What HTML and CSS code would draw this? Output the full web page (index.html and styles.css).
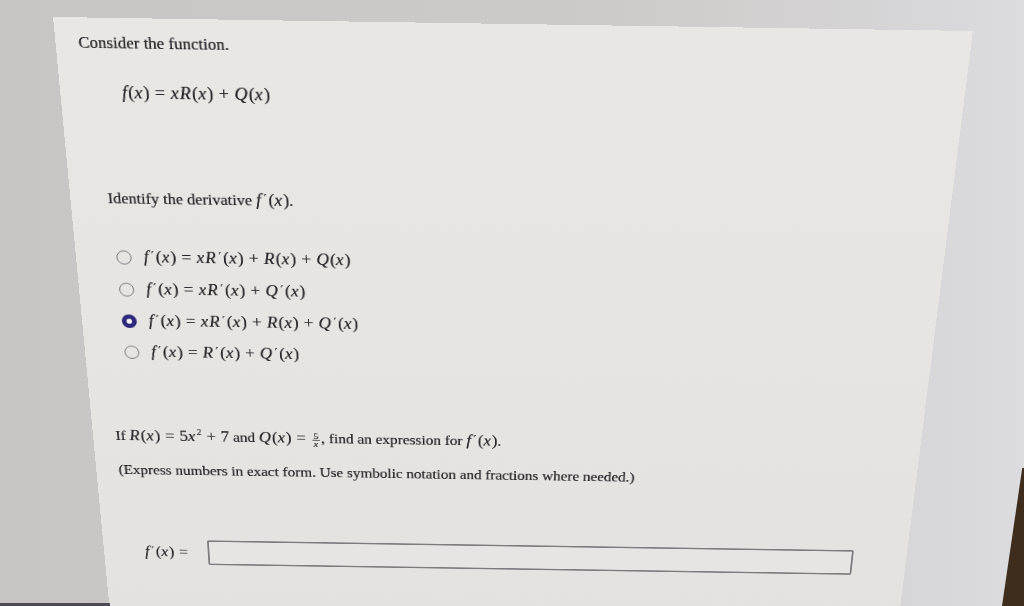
FILE: index.html
```html
<!DOCTYPE html>
<html lang="en">
<head>
<meta charset="utf-8">
<title>Consider the function</title>
<link rel="stylesheet" href="styles.css">
</head>
<body>
<div class="screen">
  <main class="card">
    <p class="lead">Consider the function.</p>
    <div class="eq m"><i>f</i>(<i>x</i>)<span class="op">=</span><i>x</i><i>R</i>(<i>x</i>)<span class="op">+</span><i>Q</i>(<i>x</i>)</div>
    <p class="prompt">Identify the derivative <span class="m"><i>f</i><span class="pr">′</span>(<i>x</i>)</span>.</p>
    <ul class="choices">
      <li class="choice"><span class="radio"></span><span class="m"><i>f</i><span class="pr">′</span>(<i>x</i>)<span class="op">=</span><i>x</i><i>R</i><span class="pr">′</span>(<i>x</i>)<span class="op">+</span><i>R</i>(<i>x</i>)<span class="op">+</span><i>Q</i>(<i>x</i>)</span></li>
      <li class="choice"><span class="radio"></span><span class="m"><i>f</i><span class="pr">′</span>(<i>x</i>)<span class="op">=</span><i>x</i><i>R</i><span class="pr">′</span>(<i>x</i>)<span class="op">+</span><i>Q</i><span class="pr">′</span>(<i>x</i>)</span></li>
      <li class="choice"><span class="radio selected"></span><span class="m"><i>f</i><span class="pr">′</span>(<i>x</i>)<span class="op">=</span><i>x</i><i>R</i><span class="pr">′</span>(<i>x</i>)<span class="op">+</span><i>R</i>(<i>x</i>)<span class="op">+</span><i>Q</i><span class="pr">′</span>(<i>x</i>)</span></li>
      <li class="choice"><span class="radio"></span><span class="m"><i>f</i><span class="pr">′</span>(<i>x</i>)<span class="op">=</span><i>R</i><span class="pr">′</span>(<i>x</i>)<span class="op">+</span><i>Q</i><span class="pr">′</span>(<i>x</i>)</span></li>
    </ul>
    <p class="given">If <span class="m"><i>R</i>(<i>x</i>)<span class="op">=</span>5<i>x</i><sup class="sq">2</sup><span class="op">+</span>7</span> and <span class="m"><i>Q</i>(<i>x</i>)<span class="op">=</span><span class="frac"><span class="num">5</span><span class="den"><i>x</i></span></span></span>, find an expression for <span class="m"><i>f</i><span class="pr">′</span>(<i>x</i>)</span>.</p>
    <p class="hint">(Express numbers in exact form. Use symbolic notation and fractions where needed.)</p>
    <div class="answer">
      <span class="label m"><i>f</i><span class="pr">′</span>(<i>x</i>)<span class="op">=</span></span>
      <span class="box"></span>
    </div>
  </main>
  <div class="bezel"></div>
  <div class="strip"></div>
</div>
</body>
</html>
```

FILE: styles.css
```css
html, body {
  margin: 0;
  padding: 0;
}

body {
  width: 1024px;
  height: 606px;
  overflow: hidden;
  background: linear-gradient(to right, #c8c6c4 0%, #cdcbc9 60%, #d8d7d9 92%, #dcdbde 100%);
  font-family: "Liberation Serif", "Times New Roman", serif;
  color: #242326;
}

.screen {
  position: relative;
  width: 1024px;
  height: 606px;
  overflow: hidden;
  padding-top: 24px;
  box-sizing: border-box;
}

.card {
  width: 920px;
  height: 740px;
  margin-left: 53px;
  box-sizing: border-box;
  padding: 16px 0 0 23px;
  background: linear-gradient(to bottom, #e8e7e4 0%, #e5e4e1 60%, #e3e2e0 100%);
  transform-origin: 50% 0;
  transform: rotate(0.872deg) perspective(731px) rotateX(-10deg);
  font-size: 17px;
  line-height: 20px;
  text-shadow: 0 0 0.6px rgba(30, 30, 34, 0.7);
}

p {
  margin: 0;
}

.m {
  font-size: 18.5px;
  white-space: nowrap;
}

.m i {
  font-style: italic;
  padding-right: 0.06em;
}

.pr {
  font-family: "DejaVu Serif", serif;
  font-size: 0.7em;
  margin-left: 0.14em;
  margin-right: 0.14em;
  position: relative;
  top: -0.2em;
}

.op {
  margin: 0 0.3em;
}

.lead {
  height: 20px;
}

.eq {
  margin: 31px 0 0 40px;
  height: 20px;
}

.prompt {
  margin: 94px 0 0 16px;
  height: 20px;
}

.choices {
  list-style: none;
  margin: 47px 0 0 20px;
  padding: 0;
  display: flex;
  flex-direction: column;
  gap: 17px;
}

.choice {
  display: flex;
  align-items: center;
  height: 20px;
  gap: 13px;
}

.radio {
  width: 16px;
  height: 16px;
  box-sizing: border-box;
  border-radius: 50%;
  border: 1.8px solid #727174;
  flex: none;
}

.radio.selected {
  border: 5px solid #2c287a;
  background: #f4f4f5;
}

.given {
  margin: 82px 0 0 2px;
  height: 20px;
}

.sq {
  font-size: 10px;
  line-height: 0;
  vertical-align: 8px;
  margin-left: 1px;
}

.frac {
  display: inline-flex;
  flex-direction: column;
  align-items: center;
  vertical-align: 5px;
  font-size: 11px;
  line-height: 9px;
  margin: 0 2px;
}

.frac .num {
  border-bottom: 1px solid #2f2e30;
  padding: 0 1px;
}

.hint {
  margin: 24px 0 0 2px;
  height: 20px;
}

.answer {
  display: flex;
  align-items: center;
  margin: 80px 0 0 24px;
  height: 33px;
}

.label {
  font-size: 18px;
  width: 72px;
  flex: none;
}

.box {
  width: 740px;
  height: 33px;
  box-sizing: border-box;
  border: 2.5px solid #7c7b7e;
  border-radius: 2px;
  background: #e6e5e3;
}

.bezel {
  position: absolute;
  right: 0;
  top: 468px;
  width: 22px;
  height: 138px;
  background: #3e2d1c;
  clip-path: polygon(100% 0, 100% 100%, 0 100%, 92% 0);
}

.strip {
  position: absolute;
  left: 0;
  bottom: 0;
  width: 110px;
  height: 3px;
  background: #4b4a55;
}
```
